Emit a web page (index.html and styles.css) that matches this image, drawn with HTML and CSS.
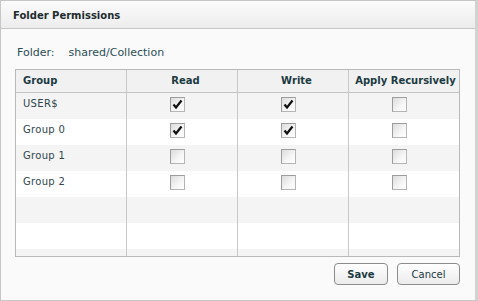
FILE: index.html
```html
<!DOCTYPE html>
<html lang="en">
  <head>
    <meta charset="UTF-8" />
    <title>Folder Permissions</title>
    <link rel="stylesheet" href="styles.css">
  </head>

  <body>
    <div id="dialog">
      <div id="dialog-header">Folder Permissions</div>

      <div id="dialog-body">
        <div id="folder-line">
          <span class="label">Folder:</span>
          <span class="path">shared/Collection</span>
        </div>

        <div id="grid">
          <div class="row head">
            <div class="cell name">Group</div>
            <div class="cell">Read</div>
            <div class="cell">Write</div>
            <div class="cell">Apply Recursively</div>
          </div>

          <div id="grid-rows">
            <div class="row">
              <div class="cell name">USER$</div>
              <div class="cell"><span class="check on"></span></div>
              <div class="cell"><span class="check on"></span></div>
              <div class="cell"><span class="check"></span></div>
            </div>
            <div class="row">
              <div class="cell name">Group 0</div>
              <div class="cell"><span class="check on"></span></div>
              <div class="cell"><span class="check on"></span></div>
              <div class="cell"><span class="check"></span></div>
            </div>
            <div class="row">
              <div class="cell name">Group 1</div>
              <div class="cell"><span class="check"></span></div>
              <div class="cell"><span class="check"></span></div>
              <div class="cell"><span class="check"></span></div>
            </div>
            <div class="row">
              <div class="cell name">Group 2</div>
              <div class="cell"><span class="check"></span></div>
              <div class="cell"><span class="check"></span></div>
              <div class="cell"><span class="check"></span></div>
            </div>
            <div class="row">
              <div class="cell name"></div>
              <div class="cell"></div>
              <div class="cell"></div>
              <div class="cell"></div>
            </div>
            <div class="row">
              <div class="cell name"></div>
              <div class="cell"></div>
              <div class="cell"></div>
              <div class="cell"></div>
            </div>
            <div class="row">
              <div class="cell name"></div>
              <div class="cell"></div>
              <div class="cell"></div>
              <div class="cell"></div>
            </div>
          </div>
        </div>

        <div id="buttons">
          <button class="primary">Save</button>
          <button>Cancel</button>
        </div>
      </div>
    </div>
  </body>
</html>
```

FILE: styles.css
```css
html {
  box-sizing: border-box;
  font-size: 10px;
  font-family: "DejaVu Sans", Verdana, sans-serif;
}
*,
*:before,
*:after {
  box-sizing: inherit;
}

body {
  margin: 0;
  padding: 0;
  background-color: #ffffff;
}

#dialog {
  width: 478px;
  height: 301px;
  border: 1px solid #c6c6c6;
  border-right: 3px solid #d2d2d2;
  background-color: #fafafa;
  display: flex;
  flex-direction: column;
}

#dialog-header {
  height: 28px;
  padding: 9px 0 0 12px;
  font-weight: bold;
  font-size: 10px;
  color: #1d2b2e;
  background-image: linear-gradient(#fbfbfb, #ececec);
  border-bottom: 1px solid #c6c6c6;
}

#dialog-body {
  display: flex;
  flex-direction: column;
  padding: 0 0 0 14px;
}

#folder-line {
  height: 40px;
  padding-top: 17px;
  padding-left: 2px;
  font-size: 11px;
  color: #2b4d55;
  display: flex;
  gap: 14px;
}

#grid {
  width: 445px;
  height: 188px;
  border: 1px solid #b9b9b9;
  background-color: #ffffff;
  display: flex;
  flex-direction: column;
}

#grid-rows {
  flex: 1;
  overflow: hidden;
}

.row {
  display: grid;
  grid-template-columns: 111px 111px 111px 1fr;
  height: 26px;
}

.row:nth-child(odd) {
  background-color: #f4f4f4;
}

.row.head {
  height: 23px;
  background-color: #f1f1f1;
  border-bottom: 1px solid #c4c4c4;
  font-weight: bold;
  color: #1b3a42;
}

.cell {
  border-right: 1px solid #c8c8c8;
  text-align: center;
  padding: 4px 9px 0 0;
}

.cell:last-child {
  border-right: none;
}

.row.head .cell {
  padding: 5px 0 0 7px;
}

.row.head .cell:last-child {
  padding-left: 3px;
}

.cell.name {
  text-align: left;
  padding-left: 7px;
  color: #30474d;
  letter-spacing: 0.3px;
}

.row.head .cell.name {
  color: #1b3a42;
  letter-spacing: 0;
}

.row .cell.name {
  padding-top: 5px;
}

.check {
  display: inline-block;
  width: 15px;
  height: 15px;
  border: 1px solid #9d9d9d;
  border-right-color: #b5b5b5;
  border-bottom-color: #b5b5b5;
  background-image: linear-gradient(135deg, #dcdcdc, #f6f6f6 60%, #ffffff);
  vertical-align: top;
}

.check.on {
  background-image: url("data:image/svg+xml;utf8,<svg xmlns='http://www.w3.org/2000/svg' width='13' height='13' viewBox='0 0 13 13'><path d='M2.5 6.5 L5 9.5 L10.5 2.5' fill='none' stroke='%23111' stroke-width='2.2'/></svg>"),
    linear-gradient(135deg, #dcdcdc, #f6f6f6 60%, #ffffff);
  background-repeat: no-repeat;
}

#buttons {
  display: flex;
  justify-content: flex-end;
  gap: 9px;
  width: 445px;
  padding-top: 6px;
}

button {
  height: 22px;
  padding: 0 12px;
  font-family: "DejaVu Sans", Verdana, sans-serif;
  font-size: 10px;
  color: #1b3a42;
  border: 1px solid #8c8c8c;
  border-radius: 4px;
  background-image: linear-gradient(#ffffff, #ebebeb);
  cursor: pointer;
}

button.primary {
  font-weight: bold;
  width: 54px;
}

button + button {
  width: 63px;
}
```
